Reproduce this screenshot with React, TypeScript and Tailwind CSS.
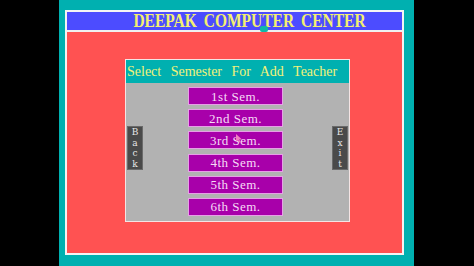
import React from 'react';

const semesters = ['1st Sem.', '2nd Sem.', '3rd Sem.', '4th Sem.', '5th Sem.', '6th Sem.'];

const SideButton = ({ label }: { label: string }) => (
  <div className="mt-[43px] flex h-[44px] w-[16px] flex-col items-center justify-start border border-[#6a6a6a] bg-[#4a4a4a] font-['DejaVu_Serif',serif] text-[9px] leading-[10.5px] text-[#e8e8e8]">
    {label.split('').map((ch, i) => (
      <span key={i} className="h-[10.5px]">
        {ch}
      </span>
    ))}
  </div>
);

const App = () => {
  return (
    <div className="flex h-[266px] w-[474px] bg-black font-['Liberation_Serif',serif]">
      <div className="w-[59px]" />
      <div className="relative w-[355px] bg-[#00b0b0] pl-[6px] pr-[10px] pt-[10px]">
        <div className="flex h-[245px] flex-col border-2 border-[#f4f4f4] bg-[#ff5252]">
          <div className="flex h-[20px] items-center justify-center border-b-2 border-[#f0f0f0] bg-[#4c4cff] pl-[30px]">
            <span className="inline-block scale-y-[1.22] text-[15.5px] font-bold leading-none text-[#f4f070] [word-spacing:3px]">
              DEEPAK COMPUTER CENTER
            </span>
          </div>
          <div className="flex-1 pl-[58px] pt-[27px]">
            <div className="w-[225px] border border-[#f4e4e4]">
              <div className="flex h-[23px] items-center bg-[#00b0b0] pl-[1px]">
                <span className="inline-block scale-y-[1.1] whitespace-nowrap text-[14px] leading-none text-[#f2f27a] [word-spacing:6px]">
                  Select Semester For Add Teacher
                </span>
              </div>
              <div className="flex h-[138px] bg-[#b2b2b2] pl-[1px] pr-[1px]">
                <SideButton label="Back" />
                <div className="flex flex-1 flex-col items-center gap-[4.2px] pt-[4px] pr-[4px]">
                  {semesters.map((s) => (
                    <div
                      key={s}
                      className="flex h-[18px] w-[95px] items-center justify-center border border-[#e6a0e6] bg-[#a800aa] text-[13px] leading-none tracking-[0.5px] text-[#f6dcf6]"
                    >
                      {s}
                    </div>
                  ))}
                </div>
                <SideButton label="Exit" />
              </div>
            </div>
          </div>
        </div>
        <div className="absolute left-[201px] top-[26px] h-[6px] w-[8px] rounded-[2px] bg-[#10b8a8]" />
        <svg className="absolute left-[177px] top-[134px]" width="7" height="9" viewBox="0 0 7 9">
          <path d="M0 0 L0 8 L2 6 L4 9 L5 8 L3 5.5 L6 5.5 Z" fill="#f080c0" />
        </svg>
      </div>
      <div className="flex-1" />
    </div>
  );
};

export default App;
